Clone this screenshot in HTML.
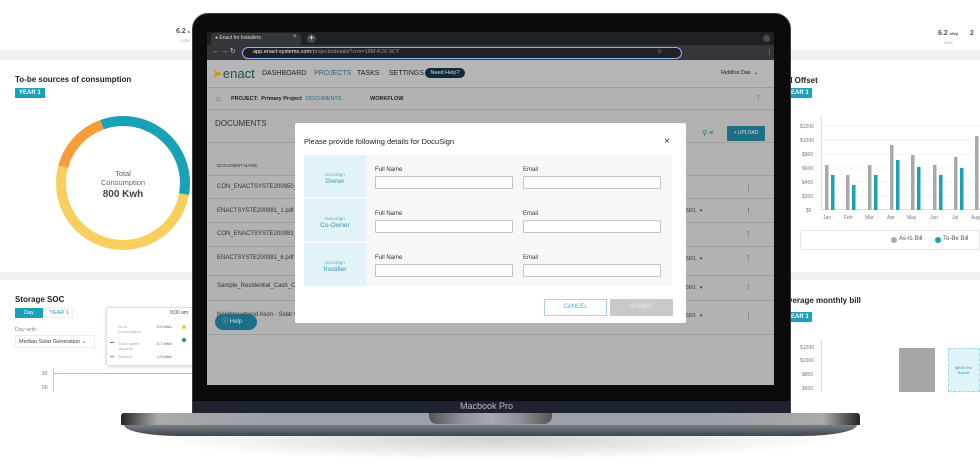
<!DOCTYPE html>
<html><head><meta charset="utf-8">
<style>
*{margin:0;padding:0;box-sizing:border-box}
body{width:980px;height:472px;overflow:hidden;background:#fff;font-family:"Liberation Sans",sans-serif;position:relative}
.a{position:absolute}
.t{position:absolute;white-space:nowrap}
.badge{position:absolute;background:#17a2b8;color:#fff;font-size:6px;font-weight:bold;padding:2px 4px}
.row{position:absolute;left:207px;width:567px;height:1px;background:#9e9e9e}
.doc{position:absolute;left:217px;font-size:6px;color:#333}
.inp{position:absolute;height:13px;background:#fff;border:1px solid #bfc4c8;border-radius:1px}
.lbl{position:absolute;font-size:6px;color:#333}
</style></head><body>

<div class="a" style="left:0;top:50px;width:980px;height:10px;background:#eef0f2"></div>
<div class="a" style="left:0;top:272px;width:980px;height:8px;background:#eef0f2"></div>
<div class="t" style="left:176px;top:28px;font-size:7px;font-weight:bold;color:#555">6.2 <span style="font-size:4px">k</span></div>
<div class="t" style="left:181px;top:38px;font-size:4px;color:#aaa">SIZE</div>
<div class="t" style="left:938px;top:30px;font-size:7px;font-weight:bold;color:#555">6.2 <span style="font-size:4px">kWp</span></div>
<div class="t" style="left:944px;top:40px;font-size:4px;color:#aaa">SIZE</div>
<div class="t" style="left:970px;top:30px;font-size:7px;font-weight:bold;color:#555">2</div>

<div class="t" style="left:15px;top:75px;font-size:8px;font-weight:bold;color:#222">To-be sources of consumption</div>
<div class="badge" style="left:15px;top:88px">YEAR 1</div>
<svg class="a" style="left:55px;top:115px" width="136" height="136" viewBox="0 0 136 136">
<g transform="rotate(-90 68 68)" fill="none" stroke-width="10">
<circle cx="68" cy="68" r="62" stroke="#f8cf5f"/>
<circle cx="68" cy="68" r="62" stroke="#17a2b8" stroke-dasharray="130 259.6" stroke-dashoffset="-368"/>
<circle cx="68" cy="68" r="62" stroke="#f79d3c" stroke-dasharray="59.5 330.1" stroke-dashoffset="-308.5"/>
</g></svg>
<div class="t" style="left:100px;top:169px;width:46px;text-align:center;font-size:7.5px;color:#666;line-height:9px">Total<br>Consumption</div>
<div class="t" style="left:100px;top:189px;width:46px;text-align:center;font-size:10px;color:#444;font-weight:bold">800 Kwh</div>

<div class="t" style="left:15px;top:295px;font-size:8px;font-weight:bold;color:#222">Storage SOC</div>
<div class="a" style="left:15px;top:308px;width:28px;height:10px;background:#17a2b8;color:#fff;font-size:5.5px;text-align:center;line-height:10px">Day</div>
<div class="a" style="left:45px;top:308px;width:28px;height:10px;border:1px solid #eee;color:#17a2b8;font-size:5.5px;text-align:center;line-height:9px">YEAR 1</div>
<div class="t" style="left:15px;top:327px;font-size:5.5px;color:#888">Day with</div>
<div class="a" style="left:15px;top:335px;width:80px;height:13px;border:1px solid #eee;font-size:5.5px;color:#444;padding:3px">Median Solar Generation &#8964;</div>
<div class="a" style="left:106px;top:307px;width:90px;height:59px;background:#fff;border:1px solid #ddd;border-radius:3px;box-shadow:0 1px 3px rgba(0,0,0,.15)"></div>
<div class="t" style="left:170px;top:310px;font-size:5px;color:#444">9:00 am</div>
<div class="t" style="left:118px;top:324px;font-size:4px;color:#aaa;line-height:5px">As-is<br>Consumption</div>
<div class="t" style="left:157px;top:324px;font-size:4px;color:#555">0.5 kWh</div>
<div class="t" style="left:118px;top:341px;font-size:4px;color:#aaa;line-height:5px">Total usable<br>capacity</div>
<div class="t" style="left:157px;top:341px;font-size:4px;color:#555">0.7 kWh</div>
<div class="a" style="left:110px;top:342px;width:4px;height:1px;background:#17a2b8"></div>
<div class="t" style="left:118px;top:354px;font-size:4px;color:#aaa">Reserve</div>
<div class="t" style="left:157px;top:354px;font-size:4px;color:#555">1.5 kWh</div>
<div class="a" style="left:110px;top:356px;width:4px;height:1px;background:#f66"></div>
<div class="a" style="left:182px;top:325px;width:4px;height:4px;border-radius:50%;background:#f8c93a"></div>
<div class="a" style="left:182px;top:338px;width:4px;height:4px;border-radius:50%;background:#1aa64a"></div>
<div class="a" style="left:53px;top:373px;width:145px;height:1px;background:#8fd1df"></div>
<div class="a" style="left:53px;top:368px;width:1px;height:24px;background:#ccc"></div>
<div class="t" style="left:42px;top:371px;font-size:5px;color:#777">60</div>
<div class="t" style="left:42px;top:385px;font-size:5px;color:#777">50</div>

<div class="t" style="left:788px;top:76px;font-size:8px;font-weight:bold;color:#222">ll Offset</div>
<div class="badge" style="left:788px;top:88px;padding:2px 3px">EAR 1</div>
<div class="a" style="left:821px;top:117px;width:1px;height:93px;background:#ddd"></div>
<div class="a" style="left:821px;top:209px;width:159px;height:1px;background:#ddd"></div>
<div class="a" style="left:800px;top:230px;width:180px;height:20px;border:1px solid #e5e5e5;border-radius:2px"></div>
<div class="a" style="left:891px;top:237px;width:6px;height:6px;border-radius:50%;background:#aaa"></div>
<div class="t" style="left:899px;top:236px;font-size:6px;color:#555">As-Is Bill</div>
<div class="a" style="left:935px;top:237px;width:6px;height:6px;border-radius:50%;background:#17a2b8"></div>
<div class="t" style="left:943px;top:236px;font-size:6px;color:#555">To-Be Bill</div>

<div class="t" style="left:788px;top:296px;font-size:8px;font-weight:bold;color:#222">verage monthly bill</div>
<div class="badge" style="left:788px;top:312px;padding:2px 3px">EAR 1</div>
<div class="a" style="left:821px;top:340px;width:1px;height:52px;background:#ddd"></div>
<div class="t" style="left:800px;top:345px;font-size:5px;color:#777">$1200</div>
<div class="t" style="left:800px;top:358px;font-size:5px;color:#777">$1000</div>
<div class="t" style="left:802px;top:372px;font-size:5px;color:#777">$800</div>
<div class="t" style="left:802px;top:386px;font-size:5px;color:#777">$600</div>
<div class="a" style="left:899px;top:348px;width:36px;height:44px;background:#a6a6a6"></div>
<div class="a" style="left:948px;top:348px;width:32px;height:44px;background:#e0f4f8;border:1px dashed #9fd9e6"></div>
<div class="t" style="left:955px;top:365px;font-size:4px;color:#17a2b8;text-align:center;line-height:5px">$800/ mo<br>Saved</div>

<div class="a" style="left:150px;top:420px;width:690px;height:40px;border-radius:50%;background:radial-gradient(ellipse at center,rgba(0,0,0,.18),rgba(0,0,0,0) 70%)"></div>

<div class="a" style="left:192px;top:13px;width:599px;height:400px;background:#0b0b0c;border-radius:16px 16px 0 0;border:1px solid #3a3d44"></div>
<div class="a" style="left:193px;top:401px;width:597px;height:12px;background:#1e2330"></div>
<div class="t" style="left:460px;top:401px;font-size:9px;color:#b8bcc5">Macbook Pro</div>
<div class="a" style="left:121px;top:413px;width:739px;height:12px;background:linear-gradient(90deg,#222 0%,#777 3%,#aaa 5%,#9aa0a8 20%,#9aa0a8 80%,#aaa 95%,#777 97%,#222 100%);border-radius:3px 3px 0 0"></div>
<div class="a" style="left:124px;top:425px;width:733px;height:11px;background:linear-gradient(#7a7f87,#40444b);border-radius:0 0 60px 60px/0 0 12px 12px"></div>
<div class="a" style="left:429px;top:413px;width:123px;height:11px;border-radius:0 0 8px 8px;background:linear-gradient(90deg,#555,#8b9097,#a5aab0,#8b9097,#555)"></div>

<div class="a" style="left:207px;top:32px;width:567px;height:353px;background:#b2b2b2;overflow:hidden">
  <div class="a" style="left:0;top:0;width:567px;height:13px;background:#202124"></div>
  <div class="a" style="left:4px;top:1px;width:90px;height:12px;background:#35363a;border-radius:4px 4px 0 0"></div>
  <div class="t" style="left:8px;top:3px;font-size:5px;color:#ddd"><span style="color:#f8c93a">&#9679;</span> Enact for Installers</div>
  <div class="t" style="left:86px;top:2px;font-size:6px;color:#ccc">×</div>
  <div class="a" style="left:100px;top:2px;width:9px;height:9px;border-radius:50%;background:#4a4b4f;color:#fff;font-size:8px;line-height:8px;text-align:center">+</div>
  <div class="a" style="left:556px;top:3px;width:7px;height:7px;border-radius:50%;background:#4a4b4f"></div>
  <div class="a" style="left:0;top:13px;width:567px;height:15px;background:#35363a"></div>
  <div class="t" style="left:5px;top:15px;font-size:7px;color:#ccc">&#8592; &#8594; &#8635;</div>
  <div class="a" style="left:35px;top:14.5px;width:440px;height:12px;border:1px solid #8ab4f8;border-radius:7px;background:#202124"></div>
  <div class="t" style="left:46px;top:17px;font-size:5.5px;color:#eee">app.enact-systems.com<span style="color:#999">/projects/details?crm=18M-KJV-3CY</span></div>
  <div class="t" style="left:450px;top:16px;font-size:6px;color:#bbb">&#9734;</div>
  <div class="t" style="left:559px;top:16px;font-size:7px;color:#bbb">&#8942;</div>
  <div class="a" style="left:0;top:28px;width:567px;height:28px;background:#b5b5b5;border-bottom:1px solid #9a9a9a"></div>
  <div class="t" style="left:5px;top:34px;font-size:13px;color:#1f4d4b"><span style="color:#c79a1a">&#10148;</span>enact</div>
  <div class="t" style="left:55px;top:38px;font-size:7px;color:#222">DASHBOARD</div>
  <div class="t" style="left:107px;top:38px;font-size:7px;color:#1d6d82">PROJECTS</div>
  <div class="t" style="left:150px;top:38px;font-size:7px;color:#222">TASKS</div>
  <div class="t" style="left:182px;top:38px;font-size:7px;color:#222">SETTINGS</div>
  <div class="a" style="left:218px;top:36px;width:40px;height:10px;border-radius:5px;background:#0f2a3a;color:#ddd;font-size:5.5px;text-align:center;line-height:10px">Need Help?</div>
  <div class="t" style="left:514px;top:38px;font-size:5.5px;color:#222">Riddhis Das &nbsp;&#8964;</div>
  <div class="t" style="left:9px;top:62px;font-size:8px;color:#1d6d82">&#8962;</div>
  <div class="t" style="left:24px;top:64px;font-size:5.5px;color:#222;font-weight:bold">PROJECT: &nbsp;Primary Project</div>
  <div class="t" style="left:99px;top:64px;font-size:5.5px;color:#1d6d82">DOCUMENTS</div>
  <div class="t" style="left:163px;top:64px;font-size:5.5px;color:#222;font-weight:bold">WORKFLOW</div>
  <div class="t" style="left:548px;top:62px;font-size:7px;color:#444">&#8942;</div>
  <div class="a" style="left:0;top:77px;width:567px;height:1px;background:#a0a0a0"></div>
  <div class="t" style="left:8px;top:87px;font-size:8px;color:#333">DOCUMENTS</div>
  <div class="a" style="left:520px;top:94px;width:38px;height:15px;background:#1c6f86;color:#ddd;font-size:5px;text-align:center;line-height:15px;border-radius:1px">+ UPLOAD</div>
  <div class="t" style="left:495px;top:97px;font-size:7px;color:#1d6d82">&#9906; &#8801;</div>
  <div class="t" style="left:10px;top:131px;font-size:4.5px;color:#333">DOCUMENT NAME</div>
</div>
<div class="row" style="top:142px"></div>
<div class="row" style="top:175px"></div>
<div class="row" style="top:198px"></div>
<div class="row" style="top:222px"></div>
<div class="row" style="top:246px"></div>
<div class="row" style="top:275px"></div>
<div class="row" style="top:300px"></div>
<div class="row" style="top:334px"></div>
<div class="doc" style="top:184px">CON_ENACTSYSTE200950_1.pdf</div>
<div class="doc" style="top:208px">ENACTSYSTE200981_1.pdf</div>
<div class="doc" style="top:231px">CON_ENACTSYSTE200981_6.pdf</div>
<div class="doc" style="top:255px">ENACTSYSTE200981_6.pdf</div>
<div class="doc" style="top:283px">Sample_Residential_Cash_Con</div>
<div class="doc" style="top:312px">Neighbourhood Ason - Solar Closi</div>
<div class="t" style="left:745px;top:184px;font-size:7px;color:#333">&#8942;</div>
<div class="t" style="left:745px;top:207px;font-size:7px;color:#333">&#8942;</div>
<div class="t" style="left:745px;top:230px;font-size:7px;color:#333">&#8942;</div>
<div class="t" style="left:745px;top:254px;font-size:7px;color:#333">&#8942;</div>
<div class="t" style="left:745px;top:283px;font-size:7px;color:#333">&#8942;</div>
<div class="t" style="left:745px;top:312px;font-size:7px;color:#333">&#8942;</div>
<div class="t" style="left:686px;top:208px;font-size:5px;color:#333">50/1 &nbsp;&nbsp;&#9662;</div>
<div class="t" style="left:686px;top:256px;font-size:5px;color:#333">50/1 &nbsp;&nbsp;&#9662;</div>
<div class="t" style="left:686px;top:285px;font-size:5px;color:#333">50/1 &nbsp;&nbsp;&#9662;</div>
<div class="t" style="left:686px;top:313px;font-size:5px;color:#333">50/1 &nbsp;&nbsp;&#9662;</div>
<div class="a" style="left:215px;top:314px;width:42px;height:16px;border-radius:8px;background:#1c6f86;color:#cde;font-size:6px;line-height:16px;padding-left:7px">&#9432; Help</div>

<div class="a" style="left:295px;top:123px;width:391px;height:200px;background:#fff;border-radius:2px"></div>
<div class="t" style="left:304px;top:137px;font-size:7.5px;color:#222">Please provide following details for DocuSign</div>
<div class="t" style="left:664px;top:136px;font-size:10px;color:#333">×</div>
<div class="a" style="left:304px;top:155px;width:368px;height:131px;background:#f6f7f7"></div>
<div class="a" style="left:304px;top:155px;width:62px;height:42px;background:#e2f3f7"></div>
<div class="a" style="left:304px;top:199px;width:62px;height:42px;background:#e2f3f7"></div>
<div class="a" style="left:304px;top:243px;width:62px;height:43px;background:#e2f3f7"></div>
<div class="t" style="left:304px;top:172px;width:62px;text-align:center;font-size:4.5px;color:#5aa9bd">DocuSign</div>
<div class="t" style="left:304px;top:178px;width:62px;text-align:center;font-size:6.5px;color:#2a9cb8">Owner</div>
<div class="t" style="left:304px;top:216px;width:62px;text-align:center;font-size:4.5px;color:#5aa9bd">DocuSign</div>
<div class="t" style="left:304px;top:222px;width:62px;text-align:center;font-size:6.5px;color:#2a9cb8">Co-Owner</div>
<div class="t" style="left:304px;top:260px;width:62px;text-align:center;font-size:4.5px;color:#5aa9bd">DocuSign</div>
<div class="t" style="left:304px;top:266px;width:62px;text-align:center;font-size:6.5px;color:#2a9cb8">Installer</div>
<div class="lbl" style="left:375px;top:167px">Full Name</div><div class="lbl" style="left:523px;top:167px">Email</div>
<div class="inp" style="left:375px;top:176px;width:138px"></div><div class="inp" style="left:523px;top:176px;width:138px"></div>
<div class="lbl" style="left:375px;top:211px">Full Name</div><div class="lbl" style="left:523px;top:211px">Email</div>
<div class="inp" style="left:375px;top:220px;width:138px"></div><div class="inp" style="left:523px;top:220px;width:138px"></div>
<div class="lbl" style="left:375px;top:255px">Full Name</div><div class="lbl" style="left:523px;top:255px">Email</div>
<div class="inp" style="left:375px;top:264px;width:138px"></div><div class="inp" style="left:523px;top:264px;width:138px"></div>
<div class="a" style="left:544px;top:299px;width:63px;height:17px;border:1px solid #9fd6e3;color:#5aa9bd;font-size:6px;text-align:center;line-height:15px">CANCEL</div>
<div class="a" style="left:610px;top:299px;width:63px;height:17px;background:#c9c9c9;color:#eee;font-size:6px;text-align:center;line-height:17px">SUBMIT</div>

<svg class="a" style="left:780px;top:115px" width="200" height="110">
<g font-size="5" fill="#777" font-family="Liberation Sans">
<text x="20" y="13">$1200</text><text x="20" y="27">$1000</text><text x="22" y="41">$800</text><text x="22" y="55">$600</text><text x="22" y="69">$400</text><text x="22" y="83">$200</text><text x="26" y="97">$0</text>
<text x="43" y="104">Jan</text><text x="64" y="104">Feb</text><text x="85" y="104">Mar</text><text x="107" y="104">Apr</text><text x="127" y="104">May</text><text x="150" y="104">Jun</text><text x="172" y="104">Jul</text><text x="191" y="104">Aug</text>
</g>
<g stroke="#eee" stroke-width=".7"><line x1="42" y1="11" x2="200" y2="11"/><line x1="42" y1="25" x2="200" y2="25"/><line x1="42" y1="39" x2="200" y2="39"/><line x1="42" y1="53" x2="200" y2="53"/><line x1="42" y1="67" x2="200" y2="67"/><line x1="42" y1="81" x2="200" y2="81"/></g>
<g fill="#a9a9a9"><rect x="45" y="50" width="3.5" height="45"/><rect x="66" y="60" width="3.5" height="35"/><rect x="88" y="50" width="3.5" height="45"/><rect x="110" y="30" width="3.5" height="65"/><rect x="131" y="40" width="3.5" height="55"/><rect x="153" y="50" width="3.5" height="45"/><rect x="174" y="42" width="3.5" height="53"/><rect x="195" y="21" width="3.5" height="74"/></g>
<g fill="#17a2b8"><rect x="51" y="60" width="3.5" height="35"/><rect x="72" y="70" width="3.5" height="25"/><rect x="94" y="60" width="3.5" height="35"/><rect x="116" y="45" width="3.5" height="50"/><rect x="137" y="52" width="3.5" height="43"/><rect x="159" y="60" width="3.5" height="35"/><rect x="180" y="53" width="3.5" height="42"/></g>
</svg>
</body></html>
